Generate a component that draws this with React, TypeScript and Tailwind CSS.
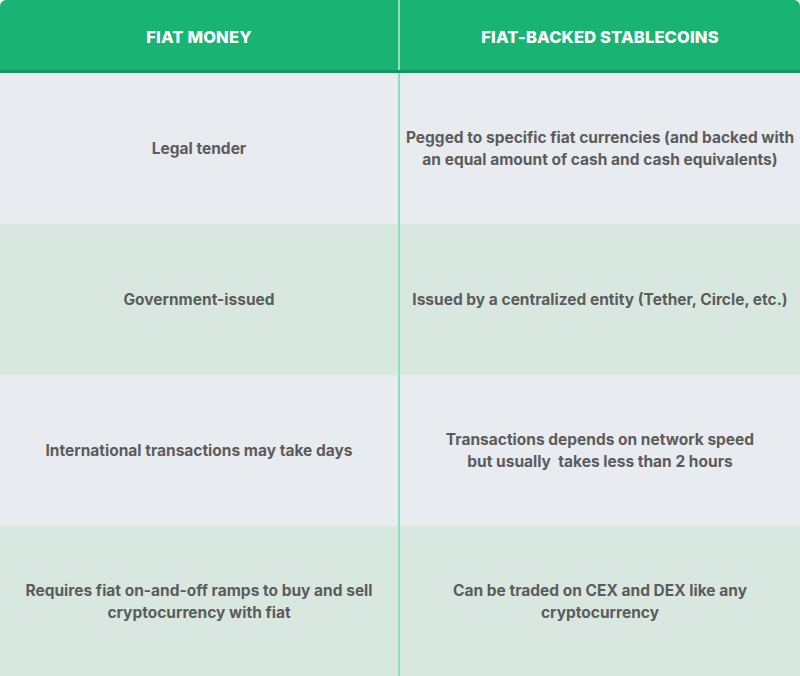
import React from "react";

const rows: [string[], string[]][] = [
  [["Legal tender"], ["Pegged to specific fiat currencies (and backed with", "an equal amount of cash and cash equivalents)"]],
  [["Government-issued"], ["Issued by a centralized entity (Tether, Circle, etc.)"]],
  [["International transactions may take days"], ["Transactions depends on network speed", "but usually  takes less than 2 hours"]],
  [["Requires fiat on-and-off ramps to buy and sell", "cryptocurrency with fiat"], ["Can be traded on CEX and DEX like any", "cryptocurrency"]],
];

function Cell({ lines, left }: { lines: string[]; left: boolean }) {
  return (
    <div
      className={`flex items-center justify-center text-center px-2 ${left ? "border-r-2 border-[#8fdfbb]" : ""}`}
    >
      <div className="text-[15.5px] leading-[22px] font-bold tracking-[0em] text-[#5c5c5c] whitespace-pre">
        {lines.map((l, i) => (
          <div key={i}>{l}</div>
        ))}
      </div>
    </div>
  );
}

export default function App() {
  return (
    <div className="w-[800px] h-[676px] overflow-hidden bg-white" style={{ fontFamily: "Inter, 'Noto Sans', sans-serif" }}>
      <div className="grid grid-cols-[400px_400px] h-[73px] bg-[#19b374] rounded-t-[6px] border-b-[3px] border-[#13975f]">
        <div className="flex items-center justify-center pt-[5px] border-r-2 border-[#8fdfbb] text-white font-extrabold text-[16.5px] tracking-[0.01em]">
          FIAT MONEY
        </div>
        <div className="flex items-center justify-center pt-[5px] text-white font-extrabold text-[16.5px] tracking-[0.01em]">
          FIAT-BACKED STABLECOINS
        </div>
      </div>
      {rows.map((r, i) => (
        <div
          key={i}
          className={`grid grid-cols-[400px_400px] h-[151px] ${i % 2 === 0 ? "bg-[#e8ebf0]" : "bg-[#d8e8e0]"}`}
        >
          <Cell lines={r[0]} left />
          <Cell lines={r[1]} left={false} />
        </div>
      ))}
    </div>
  );
}
